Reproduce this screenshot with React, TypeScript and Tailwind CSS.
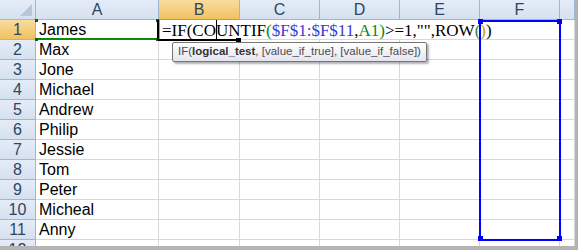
import React from "react";

const cols = [
  { key: "A", w: 123 },
  { key: "B", w: 81 },
  { key: "C", w: 80 },
  { key: "D", w: 80 },
  { key: "E", w: 80 },
  { key: "F", w: 80 },
  { key: "G", w: 15 },
];

const names = ["James", "Max", "Jone", "Michael", "Andrew", "Philip", "Jessie", "Tom", "Peter", "Micheal", "Anny", ""];

const sans = { fontFamily: '"Liberation Sans", Arial, sans-serif' };
const serif = { fontFamily: '"Liberation Serif", "Times New Roman", serif' };

function Corner({ x, y, c, s }: { x: number; y: number; c: string; s: number }) {
  return <div className="absolute" style={{ left: x, top: y, width: s, height: s, background: c }} />;
}

export default function App() {
  return (
    <div className="relative w-[578px] h-[250px] bg-[#b4b4b4] overflow-hidden" style={sans}>
      <div className="w-[575px] h-[246px] bg-white overflow-hidden flex flex-col">
        {/* header row */}
        <div className="flex h-[20px] shrink-0">
          <div className="relative w-[36px] h-[20px] border-r border-b border-[#9eb6ce] bg-gradient-to-b from-[#e4ecf7] to-[#d6e1ef]">
            <div
              className="absolute right-[3px] bottom-[3px] w-0 h-0"
              style={{ borderLeft: "12px solid transparent", borderBottom: "12px solid #b8c6d8" }}
            />
          </div>
          {cols.map((c) => (
            <div
              key={c.key}
              className={`h-[20px] border-r border-b border-[#9eb6ce] flex items-center justify-center text-[16px] text-[#2f4560] overflow-hidden ${
                c.key === "B"
                  ? "bg-gradient-to-b from-[#f9dc9f] to-[#f1c25c] border-b-[#c29b4c]"
                  : "bg-gradient-to-b from-[#e4ecf7] to-[#d6e1ef]"
              }`}
              style={{ width: c.w }}
            >
              {c.key === "G" ? "" : c.key}
            </div>
          ))}
        </div>
        {names.map((n, i) => (
          <div key={i} className="flex h-[20px] shrink-0">
            <div
              className={`w-[36px] h-[20px] border-r border-b border-[#9eb6ce] flex items-center justify-center text-[16px] text-[#2f4560] ${
                i === 0
                  ? "bg-gradient-to-b from-[#f9dc9f] to-[#f1c25c]"
                  : "bg-gradient-to-b from-[#e4ecf7] to-[#d6e1ef]"
              }`}
            >
              {i + 1}
            </div>
            {cols.map((c, j) => {
              const hideRight = i === 0 && j >= 1 && j <= 3;
              return (
                <div
                  key={c.key}
                  className={`h-[20px] border-b border-[#d8d8d8] flex items-center text-[16px] text-black leading-none ${
                    hideRight ? "" : "border-r"
                  }`}
                  style={{ width: c.w }}
                >
                  {j === 0 ? <span className="pl-[3px]">{n}</span> : null}
                </div>
              );
            })}
          </div>
        ))}
      </div>

      {/* A1 green reference border */}
      <div className="absolute left-[36px] top-[38px] w-[122px] h-[2px] bg-[#0a8a0a]" />
      <Corner x={35} y={19} c="#0b5f0b" s={3} />
      <Corner x={156} y={19} c="#0b5f0b" s={3} />
      <Corner x={35} y={38} c="#0b5f0b" s={3} />
      <Corner x={156} y={38} c="#0b5f0b" s={3} />

      {/* B1 edit cell */}
      <div className="absolute left-[157px] top-[20px] w-[2px] h-[20px] bg-black" />
      <div className="absolute left-[159px] top-[20px] w-[1px] h-[20px] bg-[#ff66cc]" />
      <div className="absolute left-[158px] top-[39px] w-[82px] h-[2px] bg-black" />
      <Corner x={236} y={38} c="#000" s={5} />

      {/* formula text with inline caret */}
      <div
        className="absolute left-[162px] top-[20px] h-[20px] flex items-center text-[17px] leading-none whitespace-nowrap text-black"
        style={serif}
      >
        <span>=IF(CO</span>
        <span className="w-0 h-[20px] border-l border-black -mr-[1px]" />
        <span>UNTIF</span>
        <span className="text-[#0a8a0a]">(</span>
        <span className="text-[#3a3acf]">$F$1:$F$11</span>
        <span>,</span>
        <span className="text-[#0a8a0a]">A1</span>
        <span className="text-[#0a8a0a]">)</span>
        <span>&gt;=1,"",ROW</span>
        <span className="text-[#1a8a5a]">(</span>
        <span className="text-[#c7a000]">)</span>
        <span>)</span>
      </div>

      {/* tooltip */}
      <div
        className="absolute left-[172px] top-[42px] h-[20px] px-[5px] flex items-center border border-[#767676] rounded-[2px] bg-gradient-to-b from-white to-[#e4e5f0] text-[11.5px] text-[#4c4c4c] whitespace-nowrap shadow-[2px_2px_2px_rgba(0,0,0,0.3)]"
        style={sans}
      >
        IF(<b className="text-[#333]">logical_test</b>, [value_if_true], [value_if_false])
      </div>

      {/* F1:F11 blue range */}
      <div className="absolute left-[479px] top-[20px] w-[82px] h-[221px] border-2 border-[#0000ff]" />
      <Corner x={478} y={19} c="#0000ff" s={5} />
      <Corner x={557} y={19} c="#0000ff" s={5} />
      <Corner x={478} y={236} c="#0000ff" s={5} />
      <Corner x={557} y={236} c="#0000ff" s={5} />
    </div>
  );
}
